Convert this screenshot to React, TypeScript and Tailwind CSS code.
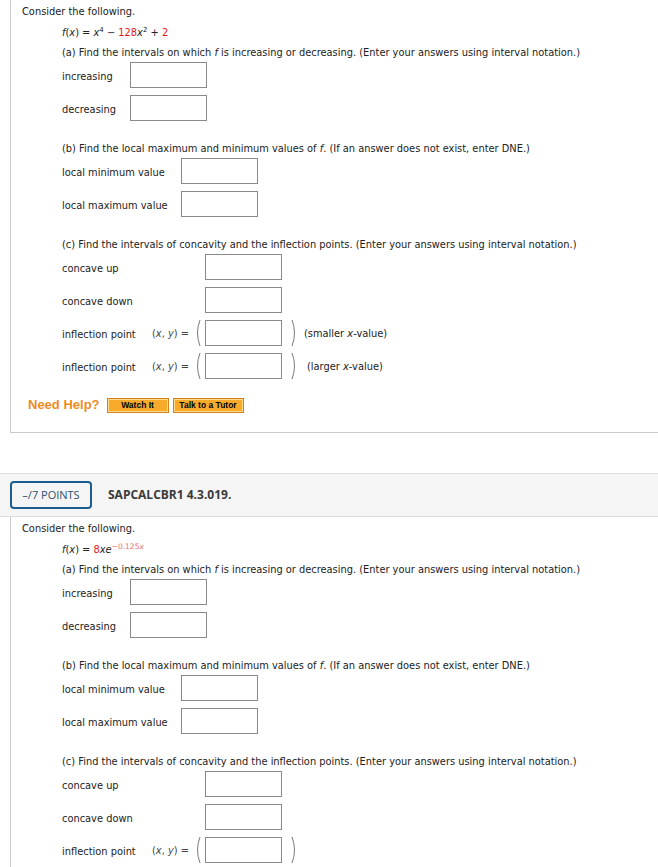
import { FC, ReactNode } from "react";

const inputBox = "h-[26px] w-[77px] shrink-0 border border-[#8a8a8a] bg-white";

const Paren: FC<{ right?: boolean }> = ({ right }) => (
  <svg width="8" height="28" viewBox="0 0 8 28" className="shrink-0">
    <path
      d={right ? "M2 1 Q7 14 2 27" : "M6 1 Q1 14 6 27"}
      fill="none"
      stroke="#7a7a7a"
      strokeWidth="1"
    />
  </svg>
);

const Field: FC<{ label: string; labelClass: string }> = ({ label, labelClass }) => (
  <div className="flex h-[26px] items-center">
    <span className={`${labelClass} pt-[4px]`}>{label}</span>
    <div className={inputBox} />
  </div>
);

const Inflection: FC<{ note?: ReactNode; noteClass?: string }> = ({ note, noteClass }) => (
  <div className="flex h-[26px] items-center">
    <span className="w-[90px] shrink-0 pt-[4px]">inflection point</span>
    <span className="w-[42px] shrink-0 pt-[2px] text-[#444]">
      (<i>x</i>, <i>y</i>) =
    </span>
    <Paren />
    <div className={`${inputBox} ml-[3px]`} />
    <div className="ml-[8px]">
      <Paren right />
    </div>
    {note && <span className={`${noteClass} pt-[2px]`}>{note}</span>}
  </div>
);

const Line: FC<{ h: string; children: ReactNode }> = ({ h, children }) => (
  <div className={`flex ${h} items-center pt-[3px]`}>{children}</div>
);

const Question: FC<{ formula: ReactNode; last?: boolean }> = ({ formula, last }) => (
  <div className="ml-[10px] border-b border-l border-[#cccccc] pb-[19px] pl-[11px]">
    <Line h="h-[21px]">Consider the following.</Line>
    <div className="pl-[40px]">
      <Line h="h-[21px]">{formula}</Line>
      <Line h="h-[20px]">
        (a) Find the intervals on which&nbsp;<i>f</i>&nbsp;is increasing or decreasing. (Enter your answers using interval notation.)
      </Line>
      <Field label="increasing" labelClass="w-[68px] shrink-0" />
      <div className="mt-[7px]">
        <Field label="decreasing" labelClass="w-[68px] shrink-0" />
      </div>

      <div className="mt-[17px]">
        <Line h="h-[20px]">
          (b) Find the local maximum and minimum values of&nbsp;<i>f</i>. (If an answer does not exist, enter DNE.)
        </Line>
      </div>
      <Field label="local minimum value" labelClass="w-[119px] shrink-0" />
      <div className="mt-[7px]">
        <Field label="local maximum value" labelClass="w-[119px] shrink-0" />
      </div>

      <div className="mt-[17px]">
        <Line h="h-[20px]">
          (c) Find the intervals of concavity and the inflection points. (Enter your answers using interval notation.)
        </Line>
      </div>
      <Field label="concave up" labelClass="w-[143px] shrink-0" />
      <div className="mt-[7px]">
        <Field label="concave down" labelClass="w-[143px] shrink-0" />
      </div>
      <div className="mt-[7px]">
        <Inflection
          note={last ? undefined : <>(smaller <i>x</i>-value)</>}
          noteClass="ml-[6px]"
        />
      </div>
      <div className="mt-[7px]">
        <Inflection
          note={last ? undefined : <>(larger <i>x</i>-value)</>}
          noteClass="ml-[9px]"
        />
      </div>
    </div>

    <div className="mt-[18px] flex h-[16px] items-center pl-[6px] font-['Liberation_Sans',Arial,sans-serif]">
      <span className="text-[13px] font-bold text-[#f08b1d]">Need Help?</span>
      <button className="ml-[7px] flex h-[15px] w-[62px] items-center justify-center border border-[#d4801c] bg-[#f8ab2b] text-[8.5px] font-bold text-black shadow-[inset_0_0_0_1px_#ffd98c]">
        Watch It
      </button>
      <button className="ml-[4px] flex h-[15px] w-[71px] items-center justify-center border border-[#d4801c] bg-[#f8ab2b] text-[8.5px] font-bold text-black shadow-[inset_0_0_0_1px_#ffd98c]">
        Talk to a Tutor
      </button>
    </div>
  </div>
);

export default function App() {
  return (
    <div className="min-h-screen bg-white font-['DejaVu_Sans',Verdana,sans-serif] text-[9.85px] text-[#222]">
      <Question
        formula={
          <span>
            <i>f</i>(<i>x</i>) = <i>x</i>
            <sup className="text-[7px]">4</sup> − <span className="text-[#e8141b]">128</span>
            <i>x</i>
            <sup className="text-[7px]">2</sup> + <span className="text-[#e8141b]">2</span>
          </span>
        }
      />

      <div className="mt-[40px] flex h-[44px] items-center border-y border-[#dddddd] bg-[#f5f5f5] pl-[10px] font-['Open_Sans',sans-serif]">
        <div className="flex h-[28px] w-[82px] items-center justify-center rounded-[4px] border-2 border-[#1c5d8f] text-[11px] text-[#2d5273]">
          –/7 POINTS
        </div>
        <span className="ml-[16px] text-[12px] font-bold text-[#3a3a3a]">SAPCALCBR1 4.3.019.</span>
      </div>

      <Question
        last
        formula={
          <span>
            <i>f</i>(<i>x</i>) = <span className="text-[#e8141b]">8</span>
            <i>xe</i>
            <sup className="text-[7.5px] text-[#f06a6a]">
              −0.125<i>x</i>
            </sup>
          </span>
        }
      />
    </div>
  );
}
